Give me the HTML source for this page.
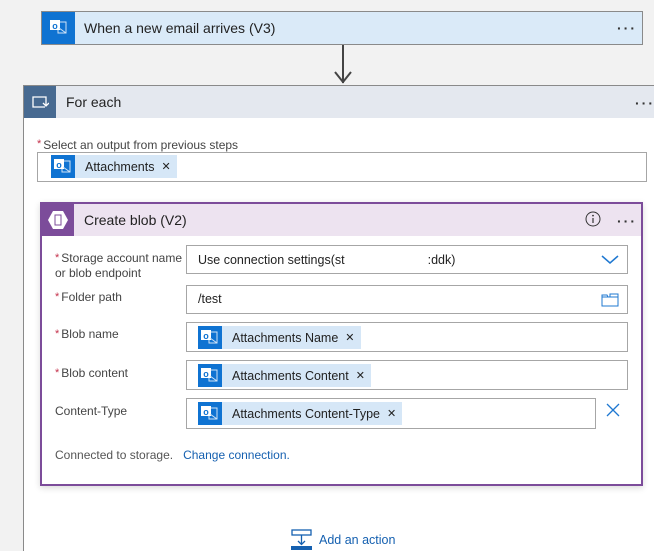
<!DOCTYPE html>
<html style="width:654px;height:551px;overflow:hidden"><head><style>
*{box-sizing:border-box;margin:0;padding:0}
body{width:654px;height:551px;background:#f2f2f2;font-family:"Segoe UI","Liberation Sans",sans-serif;position:relative;overflow:hidden;color:#222}
.abs{position:absolute}
.dots{position:absolute;font-size:14px;letter-spacing:2px;color:#333;font-weight:bold}
.lbl{position:absolute;left:55px;font-size:12px;color:#444;line-height:15px}
.star{color:#c4314b;font-size:11px;vertical-align:top;margin-right:2px}
.inp{position:absolute;left:186px;width:442px;background:#fff;border:1px solid #a6a6a6;font-size:12.5px;color:#222}
.chip{position:absolute;top:3px;left:11px;height:23px;background:#d6e7f7;display:flex;align-items:center;font-size:12.5px;padding-right:6px}
.ci{width:24px;height:23px;background:#0f73d2;margin-right:10px;display:flex;align-items:center;justify-content:center}
.x{margin-left:7px;font-size:11px}
</style></head><body>
<svg width="0" height="0" style="position:absolute"><defs><g id="ol"><rect x="1" y="1" width="10" height="10" fill="#fff"/><text x="6" y="10" font-size="9" font-family="Liberation Sans" font-weight="bold" fill="#0f73d2" text-anchor="middle">o</text><path d="M11 3h6v11h-8v-3" stroke="#cfe3f7" fill="none"/><path d="M10 9l7 5" stroke="#cfe3f7"/></g></defs></svg>

<div class="abs" style="left:41px;top:11px;width:602px;height:34px;background:#daeaf8;border:1px solid #8a8a8a"></div>
<div class="abs" style="left:42px;top:12px;width:33px;height:32px;background:#0f73d2;display:flex;align-items:center;justify-content:center"><svg width="20" height="18"><use href="#ol"/></svg></div>
<div class="abs" style="left:84px;top:20px;font-size:14px">When a new email arrives (V3)</div>
<div class="dots" style="left:617px;top:20px">···</div>
<div class="abs" style="left:342px;top:45px;width:2px;height:38px;background:#444"></div>
<svg class="abs" style="left:333px;top:70px" width="20" height="15"><path d="M2 2l8 10l8-10" stroke="#444" stroke-width="2" fill="none"/></svg>

<div class="abs" style="left:23px;top:85px;width:640px;height:480px;background:#fff;border:1px solid #8a8a8a"></div>
<div class="abs" style="left:24px;top:86px;width:640px;height:32px;background:#e4e8ef"></div>
<div class="abs" style="left:24px;top:86px;width:32px;height:32px;background:#476a91;display:flex;align-items:center;justify-content:center"><svg width="18" height="14"><path d="M2 5V2h13v8M2 5v7h12M12 8l3 3l3-3" stroke="#fff" stroke-width="1.3" fill="none"/></svg></div>
<div class="abs" style="left:66px;top:94px;font-size:14px">For each</div>
<div class="dots" style="left:635px;top:95px">···</div>
<div class="abs" style="left:37px;top:138px;font-size:12px;color:#444"><span class="star">*</span>Select an output from previous steps</div>
<div class="abs" style="left:37px;top:152px;width:610px;height:30px;background:#fff;border:1px solid #a6a6a6"><div class="chip" style="top:2px;left:13px"><div class="ci"><svg width="20" height="18"><use href="#ol"/></svg></div>Attachments<span class="x">✕</span></div></div>

<div class="abs" style="left:40px;top:202px;width:603px;height:284px;border:2px solid #7c4c9a;background:#fff;box-shadow:0 2px 6px rgba(0,0,0,.15)"></div>
<div class="abs" style="left:42px;top:204px;width:599px;height:32px;background:#ede3f0"></div>
<div class="abs" style="left:42px;top:204px;width:32px;height:32px;background:#7c4c9a;display:flex;align-items:center;justify-content:center"><svg width="22" height="20"><path d="M6 1h10l5 9l-5 9H6l-5-9z" fill="#fff"/><rect x="8" y="5" width="6" height="10" fill="none" stroke="#7c4c9a" stroke-width="1"/></svg></div>
<div class="abs" style="left:84px;top:212px;font-size:14px">Create blob (V2)</div>
<svg class="abs" style="left:585px;top:211px" width="16" height="16"><circle cx="8" cy="8" r="7" stroke="#333" fill="none"/><path d="M8 7v5" stroke="#333" stroke-width="1.2"/><circle cx="8" cy="4.6" r=".9" fill="#333"/></svg>
<div class="dots" style="left:617px;top:213px">···</div>

<div class="lbl" style="top:251px"><span class="star">*</span>Storage account name<br>or blob endpoint</div>
<div class="inp" style="top:245px;height:29px;padding:7px 11px">Use connection settings(st<span style="display:inline-block;width:83px"></span>:ddk)
<svg style="position:absolute;right:8px;top:9px" width="18" height="10"><path d="M1 1l8 7l8-7" stroke="#1f78d1" stroke-width="1.5" fill="none"/></svg></div>

<div class="lbl" style="top:290px"><span class="star">*</span>Folder path</div>
<div class="inp" style="top:285px;height:29px;padding:6px 11px">/test
<svg style="position:absolute;right:8px;top:7px" width="18" height="14"><path d="M1 4h16v9H1zM1 4V2h5l1 2M9 4V1h8v3" stroke="#1f78d1" fill="none"/></svg></div>

<div class="lbl" style="top:327px"><span class="star">*</span>Blob name</div>
<div class="inp" style="top:322px;height:30px"><div class="chip"><div class="ci"><svg width="20" height="18"><use href="#ol"/></svg></div>Attachments Name<span class="x">✕</span></div></div>

<div class="lbl" style="top:366px"><span class="star">*</span>Blob content</div>
<div class="inp" style="top:360px;height:30px"><div class="chip"><div class="ci"><svg width="20" height="18"><use href="#ol"/></svg></div>Attachments Content<span class="x">✕</span></div></div>

<div class="lbl" style="top:404px">Content-Type</div>
<div class="inp" style="top:398px;height:31px;width:410px"><div class="chip"><div class="ci"><svg width="20" height="18"><use href="#ol"/></svg></div>Attachments Content-Type<span class="x">✕</span></div></div>
<svg class="abs" style="left:605px;top:402px" width="16" height="16"><path d="M2 2l12 12M14 2L2 14" stroke="#1f78d1" stroke-width="1.3"/></svg>

<div class="abs" style="left:55px;top:448px;font-size:12px;color:#555">Connected to storage.&nbsp;&nbsp; <span style="color:#1560b0">Change connection.</span></div>

<svg class="abs" style="left:291px;top:529px" width="22" height="21"><rect x="1" y="1" width="19" height="5" fill="none" stroke="#1560b0" stroke-width="1.3"/><path d="M10.5 6v9M7 12l3.5 3.5L14 12" stroke="#1560b0" stroke-width="1.3" fill="none"/><rect x="0" y="17" width="21" height="4" fill="#1560b0"/></svg>
<div class="abs" style="left:319px;top:533px;font-size:12.5px;color:#1560b0">Add an action</div>
</body></html>
